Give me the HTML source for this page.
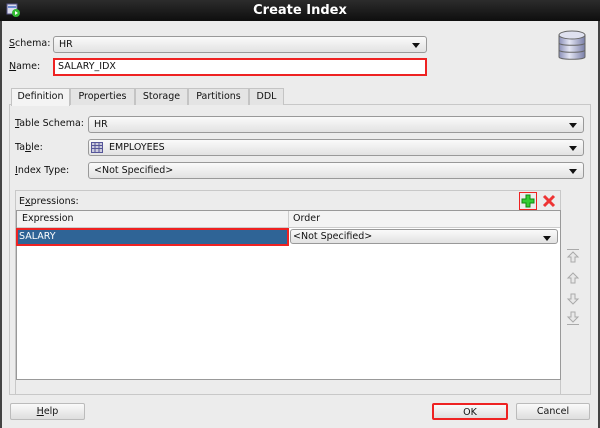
<!DOCTYPE html>
<html><head><style>
*{box-sizing:border-box;margin:0;padding:0}
body{width:600px;height:428px;background:#ececec;font-family:"DejaVu Sans","Liberation Sans",sans-serif;font-size:9.5px;color:#111;position:relative;overflow:hidden}
.a{position:absolute}
.title{left:0;top:0;width:600px;height:21px;background:linear-gradient(#2c2c2c,#0e0e0e);color:#fff;font-weight:bold;font-size:13px;text-align:center;line-height:21px}
.frame{left:0;top:21px;width:600px;height:407px;border-left:2px solid #444;border-right:2px solid #444}
.combo{border:1px solid #999;border-radius:3px;background:linear-gradient(#fafafa,#e2e2e2);padding-left:5px;line-height:15px}
.combo:after{content:"";position:absolute;right:6px;top:6px;border-left:4px solid transparent;border-right:4px solid transparent;border-top:5px solid #111}
.tab{top:88px;height:17px;border:1px solid #c4c4c4;border-bottom:none;background:#e4e4e4;text-align:center;line-height:16px}
.btn{top:403px;height:17px;border:1px solid #bbb;border-radius:2px;background:linear-gradient(#fafafa,#dedede);text-align:center;line-height:15px}
u{text-decoration:underline}
</style></head><body>
<div class="a title">Create Index</div>
<div class="a frame"></div>
<svg class="a" style="left:6px;top:3px" width="14" height="14"><rect x="1" y="1" width="10" height="10" fill="#dde" stroke="#558"/><rect x="2" y="3" width="8" height="2" fill="#6a8ad0"/><circle cx="10" cy="10" r="4" fill="#3b3"/><path d="M9 8l3 2-3 2z" fill="#fff"/></svg>
<div class="a" style="left:9px;top:38px"><u>S</u>chema:</div>
<div class="a combo" style="left:53px;top:36px;width:374px;height:17px">HR</div>
<div class="a" style="left:9px;top:61px"><u>N</u>ame:</div>
<div class="a" style="left:53px;top:58px;width:374px;height:18px;border:2px solid #e22;background:#fff;padding-left:3px;line-height:14px">SALARY_IDX</div>
<svg class="a" style="left:557px;top:29px" width="30" height="34"><defs><linearGradient id="g" x1="0" x2="1"><stop offset="0" stop-color="#8a8fb8"/><stop offset=".4" stop-color="#e4e6f4"/><stop offset="1" stop-color="#7a7fa8"/></linearGradient></defs><path d="M2 6v22c0 3 26 3 26 0V6z" fill="url(#g)" stroke="#666"/><ellipse cx="15" cy="6" rx="13" ry="4" fill="#dfe1ef" stroke="#666"/><path d="M2 14c0 3 26 3 26 0M2 21c0 3 26 3 26 0" fill="none" stroke="#666"/></svg>
<div class="a" style="left:9px;top:104px;width:582px;height:291px;border:1px solid #c8c8c8"></div>
<div class="a tab" style="left:11px;width:59px;background:#f4f4f4;height:18px">Definition</div>
<div class="a tab" style="left:70px;width:65px">Properties</div>
<div class="a tab" style="left:135px;width:53px">Storage</div>
<div class="a tab" style="left:188px;width:61px">Partitions</div>
<div class="a tab" style="left:249px;width:35px">DDL</div>
<div class="a" style="left:15px;top:118px"><u>T</u>able Schema:</div>
<div class="a combo" style="left:88px;top:116px;width:496px;height:17px">HR</div>
<div class="a" style="left:15px;top:142px">Ta<u>b</u>le:</div>
<div class="a combo" style="left:88px;top:139px;width:496px;height:17px;padding-left:20px">EMPLOYEES</div>
<svg class="a" style="left:91px;top:142px" width="12" height="11"><rect x=".5" y=".5" width="11" height="10" fill="#ccd" stroke="#559"/><path d="M.5 3.5h11M.5 6.5h11M4 .5v10M8 .5v10" stroke="#559"/></svg>
<div class="a" style="left:15px;top:165px"><u>I</u>ndex Type:</div>
<div class="a combo" style="left:88px;top:162px;width:496px;height:17px">&lt;Not Specified&gt;</div>
<div class="a" style="left:15px;top:190px;width:546px;height:205px;border:1px solid #c8c8c8;border-bottom:none"></div>
<div class="a" style="left:19px;top:196px">E<u>x</u>pressions:</div>
<div class="a" style="left:519px;top:192px;width:18px;height:18px;border:1px solid #e22"></div>
<svg class="a" style="left:520px;top:193px" width="16" height="16"><path d="M6 2h4v4h4v4h-4v4H6v-4H2V6h4z" fill="#3c3" stroke="#181"/></svg>
<svg class="a" style="left:541px;top:193px" width="16" height="16"><path d="M3 3l10 10M13 3L3 13" stroke="#e33" stroke-width="3"/></svg>
<div class="a" style="left:16px;top:210px;width:545px;height:170px;background:#fff;border:1px solid #999"></div>
<div class="a" style="left:17px;top:211px;width:272px;height:17px;background:#f3f3f3;border-right:1px solid #ccc;border-bottom:1px solid #ccc;padding-left:5px;line-height:16px">Expression</div>
<div class="a" style="left:289px;top:211px;width:271px;height:17px;background:#f3f3f3;border-bottom:1px solid #ccc;padding-left:4px;line-height:16px">Order</div>
<div class="a" style="left:16px;top:228px;width:273px;height:18px;background:#2f6496;border:2px solid #e22;color:#fff;padding-left:1px;line-height:14px">SALARY</div>
<div class="a combo" style="left:290px;top:229px;width:268px;height:15px;padding-left:2px;line-height:13px">&lt;Not Specified&gt;</div>
<svg class="a" style="left:564px;top:248px" width="18" height="78" fill="#e8e8e8" stroke="#aaa"><path d="M3 1.5h12M9 4l-5 5h3v5h4v-5h3z"/><path d="M9 25l-5 5h3v5h4v-5h3z"/><path d="M9 56l-5-5h3v-5h4v5h3z"/><path d="M9 74l-5-5h3v-5h4v5h3zM3 76.5h12"/></svg>
<div class="a btn" style="left:10px;width:75px"><u>H</u>elp</div>
<div class="a btn" style="left:432px;width:76px;border:2px solid #e22">OK</div>
<div class="a btn" style="left:516px;width:74px">Cancel</div>
</body></html>
